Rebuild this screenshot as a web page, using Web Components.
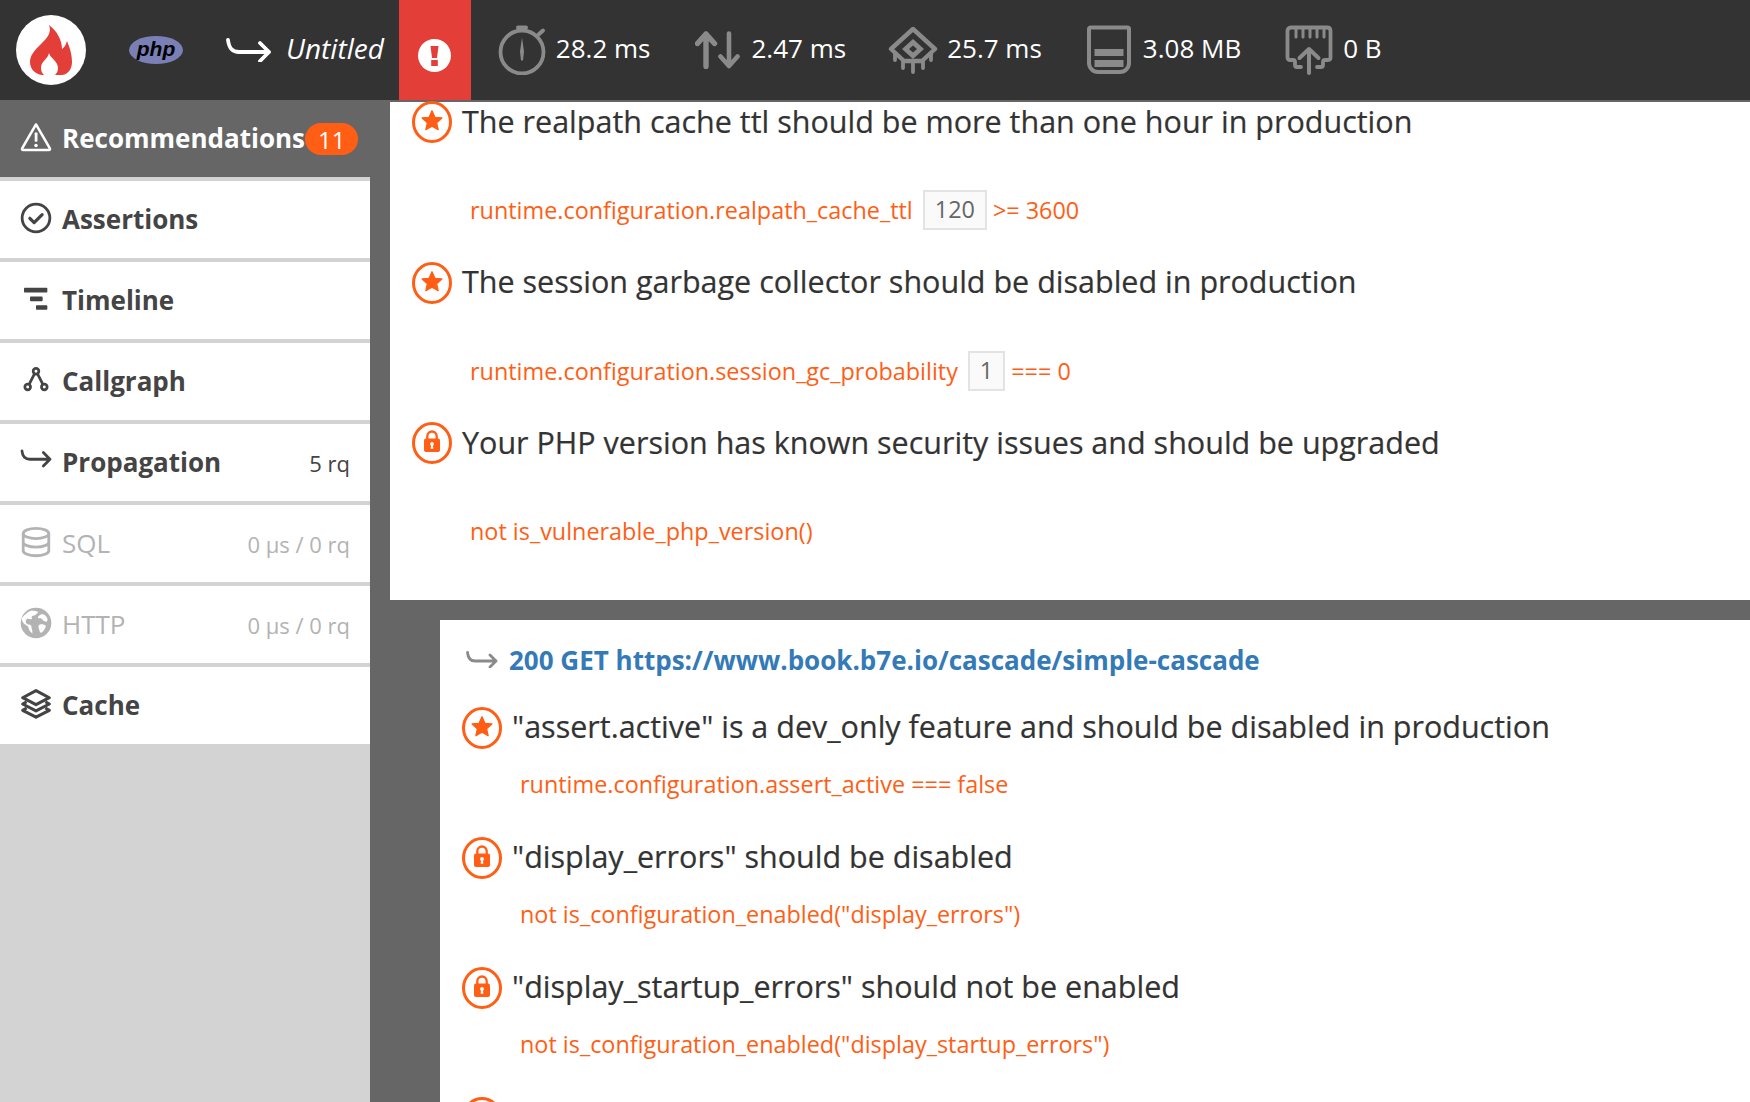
<!doctype html>
<html>
<head>
<meta charset="utf-8">
<title>Profile</title>
<style>
  html, body { margin: 0; height: 100%; overflow: hidden; }
  body { font-family: "Open Sans", sans-serif; background: #666; }
  app-shell { height: 1102px; }
</style>
</head>
<body>
<app-shell>
  <top-bar slot="top"></top-bar>
  <side-nav slot="side">
    <nav-item icon="warn" active label="Recommendations" badge="11"></nav-item>
    <nav-item icon="check" label="Assertions"></nav-item>
    <nav-item icon="timeline" label="Timeline"></nav-item>
    <nav-item icon="graph" label="Callgraph"></nav-item>
    <nav-item icon="hook" label="Propagation" meta="5 rq"></nav-item>
    <nav-item icon="db" muted label="SQL" meta="0 µs / 0 rq"></nav-item>
    <nav-item icon="globe" muted label="HTTP" meta="0 µs / 0 rq"></nav-item>
    <nav-item icon="layers" label="Cache"></nav-item>
  </side-nav>
  <rec-panel>
    <rec-item kind="star" spaced title="The realpath cache ttl should be more than one hour in production"><span>runtime.configuration.realpath_cache_ttl</span><val-box>120</val-box><span>&gt;= 3600</span></rec-item>
    <rec-item kind="star" spaced title="The session garbage collector should be disabled in production"><span>runtime.configuration.session_gc_probability</span><val-box>1</val-box><span>=== 0</span></rec-item>
    <rec-item kind="lock" spaced title="Your PHP version has known security issues and should be upgraded"><span>not is_vulnerable_php_version()</span></rec-item>
  </rec-panel>
  <rec-panel nested heading="200 GET https://www.book.b7e.io/cascade/simple-cascade">
    <rec-item kind="star" title="&quot;assert.active&quot; is a dev_only feature and should be disabled in production"><span>runtime.configuration.assert_active === false</span></rec-item>
    <rec-item kind="lock" title="&quot;display_errors&quot; should be disabled"><span>not is_configuration_enabled("display_errors")</span></rec-item>
    <rec-item kind="lock" title="&quot;display_startup_errors&quot; should not be enabled"><span>not is_configuration_enabled("display_startup_errors")</span></rec-item>
    <rec-item kind="star" title="&quot;zend.detect_unicode&quot; should be disabled as BOMs are not portable"></rec-item>
  </rec-panel>
</app-shell>

<script>
// nav and header glyphs, all on a 24 unit box
const ICONS = {
  warn: `<path d="M12 2.6 1.6 20.6c-.3.6.1 1.2.7 1.2h19.4c.6 0 1-.6.7-1.2z" fill="none" stroke="currentColor" stroke-width="1.9" stroke-linejoin="round"/><rect x="11" y="8.6" width="2.1" height="7" rx=".6" fill="currentColor"/><circle cx="12" cy="18.3" r="1.3" fill="currentColor"/>`,
  check: `<circle cx="12" cy="12" r="10.4" fill="none" stroke="currentColor" stroke-width="2.1"/><path d="M7.4 12.2l3.2 3.2 6-5.9" fill="none" stroke="currentColor" stroke-width="2.4" stroke-linecap="round" stroke-linejoin="round"/>`,
  timeline: `<rect x="3" y="3.5" width="17.5" height="3.6" rx=".6" fill="currentColor"/><rect x="7.5" y="10.2" width="9.5" height="3.4" rx=".6" fill="currentColor"/><rect x="12" y="16.7" width="8.5" height="3.4" rx=".6" fill="currentColor"/>`,
  graph: `<g transform="translate(12 11.5) scale(.82) translate(-12 -12)" fill="none" stroke="currentColor" stroke-width="2.5"><circle cx="12" cy="4.6" r="2.6"/><circle cx="4.4" cy="19" r="2.6"/><circle cx="19.6" cy="19" r="2.6"/><path d="M10.6 7 5.7 16.7M13.4 7l4.9 9.7"/></g>`,
  hook: `<path d="M1.5 4.5c.3 4 2 6.200 6 6.200h15M17.500 5.700l5 5-5 5" fill="none" stroke="currentColor" stroke-width="2.100" stroke-linecap="round" stroke-linejoin="round"/>`,
  db: `<g fill="none" stroke="currentColor" stroke-width="2.100"><ellipse cx="12" cy="5.600" rx="9.600" ry="3.800"/><path d="M2.400 5.600v13c0 2 4.300 3.700 9.600 3.700s9.600-1.700 9.600-3.700v-13M2.400 12c0 2.100 4.300 3.800 9.600 3.800s9.600-1.700 9.600-3.800"/></g>`,
  globe: `<circle cx="12" cy="12" r="11.500" fill="currentColor"/><path d="M9 2.600c1.600.4 3 .2 4.300 1 .8.8-.8 1.200-1.400 2-.7 1-2.200.4-3 1.300-.7.8.7 1.600-.3 2.200-1.200.6-2.400-.8-3.600.1-1 1-.8 2.500.1 3.400 1 1 2.300.3 3.200 1.200.7.9.1 2 .7 3 .5 1-.2 2.400.8 3.300-2.100-.9-3.300-3.300-3.700-5.300-.6-1.100-2-1.500-3-2.300-1.200-1-1.700-2.500-2-3.800C2.800 6.500 5.600 3.500 9 2.600zM16 5.500c1.200-.3 2.500.2 3.300 1.300.9 1 1.700 2.300 1.200 3.600-.5 1.100-1.900.5-2.800 0-.8-.5-.9-1.500-1.700-1.800-.9-.4-2 .3-2.500-.5-.4-.9 1.400-2 2.500-2.600zM15.500 13c1.500-.2 3 .2 3.900 1.300-.3 1.800-1.500 3.700-3.200 4.900-1 .6-1.500-.9-1.700-1.900-.2-1.200-1-2.100-.6-3.100.2-.7.9-1.100 1.600-1.200z" fill="#fff"/>`,
  layers: `<g fill="none" stroke="currentColor" stroke-width="2.300" stroke-linejoin="round"><path d="M12 2 22 7.300 12 12.500 2 7.300z"/><path d="M5 10.300 2 12l10 5.200L22 12l-3-1.700"/><path d="M5 15 2 16.700l10 5.200 10-5.200L19 15"/></g>`,
};

const BADGE_ICONS = {
  star: `<path d="M20 9.800l2.900 6.500 7 .7-5.300 4.700 1.500 6.900L20 25.100l-6.100 3.500 1.500-6.900-5.300-4.700 7-.7z" fill="#ff5e14" stroke="#ff5e14" stroke-width="1.300" stroke-linejoin="round"/>`,
  lock: `<path d="M15.300 17v-2.800a4.700 4.700 0 0 1 9.400 0V17" fill="none" stroke="#ff5e14" stroke-width="2.300"/><rect x="12" y="16.600" width="16" height="13.400" rx="2" fill="#ff5e14"/><circle cx="20" cy="22" r="1.900" fill="#fff"/><path d="M19.100 22.500h1.800l.4 4.200h-2.600z" fill="#fff"/>`,
};

class AppShell extends HTMLElement {
  constructor() {
    super();
    this.attachShadow({ mode: "open" }).innerHTML = `
      <style>
        :host { display: grid; grid-template-columns: 370px 1fr; grid-template-rows: 100px 1fr; background: #666; overflow: hidden; }
        .top { grid-column: 1 / -1; }
        .main { padding: 4px 0 0 20px; min-width: 0; overflow: hidden; }
      </style>
      <div class="top"><slot name="top"></slot></div>
      <slot name="side"></slot>
      <div class="main"><slot></slot></div>`;
  }
}

class TopBar extends HTMLElement {
  constructor() {
    super();
    const stat = (svg, label, gap, after) => `<div class="stat" style="gap:${gap}px;margin-right:${after}px">${svg}<span>${label}</span></div>`;
    this.attachShadow({ mode: "open" }).innerHTML = `
      <style>
        :host { display: flex; align-items: center; height: 100px; background: #333; color: #fff; font-size: 26px; }
        svg { display: block; flex: none; }
        .logo { margin: 0 43px 0 16px; }
        .php { margin-right: 43px; }
        .name { display: flex; align-items: center; gap: 14px; font-style: italic; font-size: 28px; margin-right: 15px; }
        .name span, .stat span { padding-bottom: 4px; }
        .alert { align-self: stretch; width: 72px; background: #e33e38; display: flex; align-items: center; justify-content: center; margin-right: 27px; padding-top: 10px; box-sizing: border-box; }
        .stat { display: flex; align-items: center; }
      </style>
      <svg class="logo" width="70" height="70" viewBox="0 0 70 70">
        <circle cx="35" cy="35" r="35" fill="#fff"/>
        <path d="M33 10c3 8-2 13-8 19-6 6-11 11-11 18 0 7 5 12 12 13h20c7-1 10-7 10-13 0-9-3-16-5-21-1 3-2 6-5 8 0-9-5-18-13-24z" fill="#e33e38"/>
        <path d="M33 38c1 5 9 8 9 15 0 3-1 5-3 7H28c-2-2-3-4-3-7 0-7 7-9 8-15z" fill="#fff"/>
      </svg>
      <svg class="php" width="54" height="28" viewBox="0 0 54 28">
        <ellipse cx="27" cy="14" rx="27" ry="14" fill="#7a7fb5"/>
        <text x="27" y="20" text-anchor="middle" font-family="'Liberation Sans',sans-serif" font-size="21" font-weight="700" font-style="italic" fill="#000">php</text>
      </svg>
      <div class="name">
        <svg width="46" height="24" viewBox="0 0 46 24"><path d="M2 2c1 8 4 12 11 12h30M34 5l9 9-9 9" fill="none" stroke="#fff" stroke-width="3.800" stroke-linecap="round" stroke-linejoin="round"/></svg>
        <span>Untitled</span>
      </div>
      <div class="alert">
        <svg width="33" height="33" viewBox="0 0 33 33"><circle cx="16.500" cy="16.500" r="16.500" fill="#fff"/><path d="M12.500 7h8l-1.500 12h-5z" fill="#e33e38"/><rect x="13.200" y="21" width="6.600" height="6" fill="#e33e38"/></svg>
      </div>
      ${stat(`<svg width="48" height="50" viewBox="0 0 48 50" fill="none" stroke="#8a8a8a"><circle cx="24" cy="27" r="21.500" stroke-width="3.800"/><path d="M24 12.500l2 14-1 9h-2l-1-9z" fill="#8a8a8a" stroke="none"/><path d="M20 2.500h8" stroke-width="4" stroke-linecap="round"/><path d="M40 10l5-4.500" stroke-width="4" stroke-linecap="round"/></svg>`, "28.2 ms", 10, 44)}
      ${stat(`<svg width="46" height="38" viewBox="0 0 46 38" fill="none" stroke="#8a8a8a" stroke-linecap="round" stroke-linejoin="round"><path d="M11 35.500V3M2.500 12.500 11 3l8.500 9.500" stroke-width="5.400"/><path d="M34 2.500V35M25.500 25.500 34 35l8.500-9.500" stroke-width="4.600"/></svg>`, "2.47 ms", 11, 42)}
      ${stat(`<svg width="50" height="48" viewBox="0 0 50 48" fill="none" stroke="#8a8a8a" stroke-width="4.400"><path d="M25 3 47 23 34 35H16L3 23z" stroke-linejoin="round"/><path d="M25 13l11 10-11 10-11-10zM25 19.500l4 3.500-4 3.500-4-3.500z" fill="#8a8a8a" fill-rule="evenodd" stroke="none"/><path d="M7 28v6M15 35v7M25 37v9M35 35v7M43 28v6" stroke-width="3.800" stroke-linecap="round"/></svg>`, "25.7 ms", 9, 44)}
      ${stat(`<svg width="46" height="50" viewBox="0 0 46 50" fill="none" stroke="#8a8a8a"><path d="M3 4a1.500 1.500 0 0 1 1.500-1.500h37A1.500 1.500 0 0 1 43 4v34a9 9 0 0 1-9 9H12a9 9 0 0 1-9-9z" stroke-width="4"/><path d="M8.500 27.500h29M8.500 38.500h29" stroke-width="7"/></svg>`, "3.08 MB", 11, 44)}
      ${stat(`<svg width="48" height="50" viewBox="0 0 48 50" fill="none" stroke="#8a8a8a" stroke-width="3.800" stroke-linecap="round" stroke-linejoin="round"><path d="M16 42H12c-1.500 0-2-1-2-2v-3c0-1.500-1-2-2-2H5c-1.500 0-2.500-1-2.500-2.500V6c0-2 1-3.500 3.500-3.500h36c2.500 0 3.500 1.500 3.500 3.500v26.500c0 1.500-1 2.500-2.500 2.500h-3c-1 0-2 .5-2 2v3c0 1-.5 2-2 2h-4"/><path d="M11 3v9M18 3v9M25 3v9M32 3v9M39 3v9" stroke-width="3"/><path d="M24 48V24M14.500 33 24 24l9.500 9" stroke-width="4"/></svg>`, "0 B", 10, 0)}`;
  }
}

class SideNav extends HTMLElement {
  constructor() {
    super();
    this.attachShadow({ mode: "open" }).innerHTML = `
      <style>
        :host { display: flex; flex-direction: column; background: #d3d3d3; }
      </style>
      <slot></slot>`;
  }
}

class NavItem extends HTMLElement {
  constructor() {
    super();
    const a = (n) => this.getAttribute(n);
    const badge = a("badge") ? `<span class="badge">${a("badge")}</span>` : "";
    const meta = a("meta") ? `<span class="meta">${a("meta")}</span>` : "";
    this.attachShadow({ mode: "open" }).innerHTML = `
      <style>
        :host { display: flex; align-items: center; height: 77px; margin-bottom: 4px; padding: 0 20px; background: #fff; color: #444; box-sizing: border-box; }
        :host([active]) { background: #666; color: #fff; width: 390px; padding-right: 0; }
        :host([muted]) { color: #b3b3b3; }
        svg { width: 32px; height: 32px; flex: none; margin: 0 10px 3px 0; }
        .label { font-size: 26px; font-weight: 700; padding-bottom: 2px; }
        :host([muted]) .label { font-weight: 400; }
        .badge { background: #ff5e14; color: #fff; font-size: 24px; border-radius: 16px; height: 32px; line-height: 34px; padding: 0 13px; }
        .meta { margin-left: auto; font-size: 22px; }
      </style>
      <svg viewBox="0 0 24 24">${ICONS[a("icon")]}</svg>
      <span class="label">${a("label")}</span>${badge}${meta}`;
  }
}

class RecPanel extends HTMLElement {
  constructor() {
    super();
    const h = this.getAttribute("heading");
    this.attachShadow({ mode: "open" }).innerHTML = `
      <style>
        :host { display: block; background: #fff; padding: 0 0 14px 22px; }
        :host([nested]) { margin: 20px 0 0 50px; padding: 20px 0 0 22px; }
        .head { display: flex; align-items: center; gap: 11px; height: 40px; margin-bottom: 30px; font-size: 26px; font-weight: 700; color: #337ab7; }
        .head svg { width: 32px; height: 17px; flex: none; margin-left: 4px; }
      </style>
      ${h ? `<div class="head"><svg viewBox="0 0 32 17"><path d="M1.500 1.500C2 7 4 10 9 10h21M24 4l6 6-6 6" fill="none" stroke="#8a8a8a" stroke-width="2.800" stroke-linecap="round" stroke-linejoin="round"/></svg><span>${h}</span></div>` : ""}
      <slot></slot>`;
  }
}

class RecItem extends HTMLElement {
  constructor() {
    super();
    const kind = this.getAttribute("kind");
    this.attachShadow({ mode: "open" }).innerHTML = `
      <style>
        :host { display: block; }
        .title { display: flex; align-items: center; gap: 10px; height: 40px; font-size: 30.5px; color: #333; -webkit-text-stroke: .2px #333; white-space: nowrap; margin-top: -2px; }
        .title span { padding-bottom: 3px; }
        svg { width: 40px; height: 42px; flex: none; }
        .cond { display: flex; align-items: center; gap: 10px; min-height: 40px; margin: 16.5px 0 35.5px 58px; font-size: 23.4px; color: #ff5e14; white-space: nowrap; }
        :host([spaced]) .cond { margin: 48px 0 34.500px 58px; }
      </style>
      <div class="title">
        <svg viewBox="0 0 40 42"><ellipse cx="20" cy="21" rx="18.500" ry="19.500" fill="none" stroke="#ff5e14" stroke-width="3"/>${BADGE_ICONS[kind]}</svg>
        <span>${this.getAttribute("title")}</span>
      </div>
      <div class="cond"><slot></slot></div>`;
  }
}

class ValBox extends HTMLElement {
  constructor() {
    super();
    this.attachShadow({ mode: "open" }).innerHTML = `
      <style>
        :host { display: block; box-sizing: border-box; height: 40px; line-height: 35px; padding: 0 10px; margin-right: -4px; border: 2px solid #e3e3e3; background: #fafafa; color: #666; }
      </style>
      <slot></slot>`;
  }
}

customElements.define("app-shell", AppShell);
customElements.define("top-bar", TopBar);
customElements.define("side-nav", SideNav);
customElements.define("nav-item", NavItem);
customElements.define("rec-panel", RecPanel);
customElements.define("rec-item", RecItem);
customElements.define("val-box", ValBox);
</script>
</body>
</html>
